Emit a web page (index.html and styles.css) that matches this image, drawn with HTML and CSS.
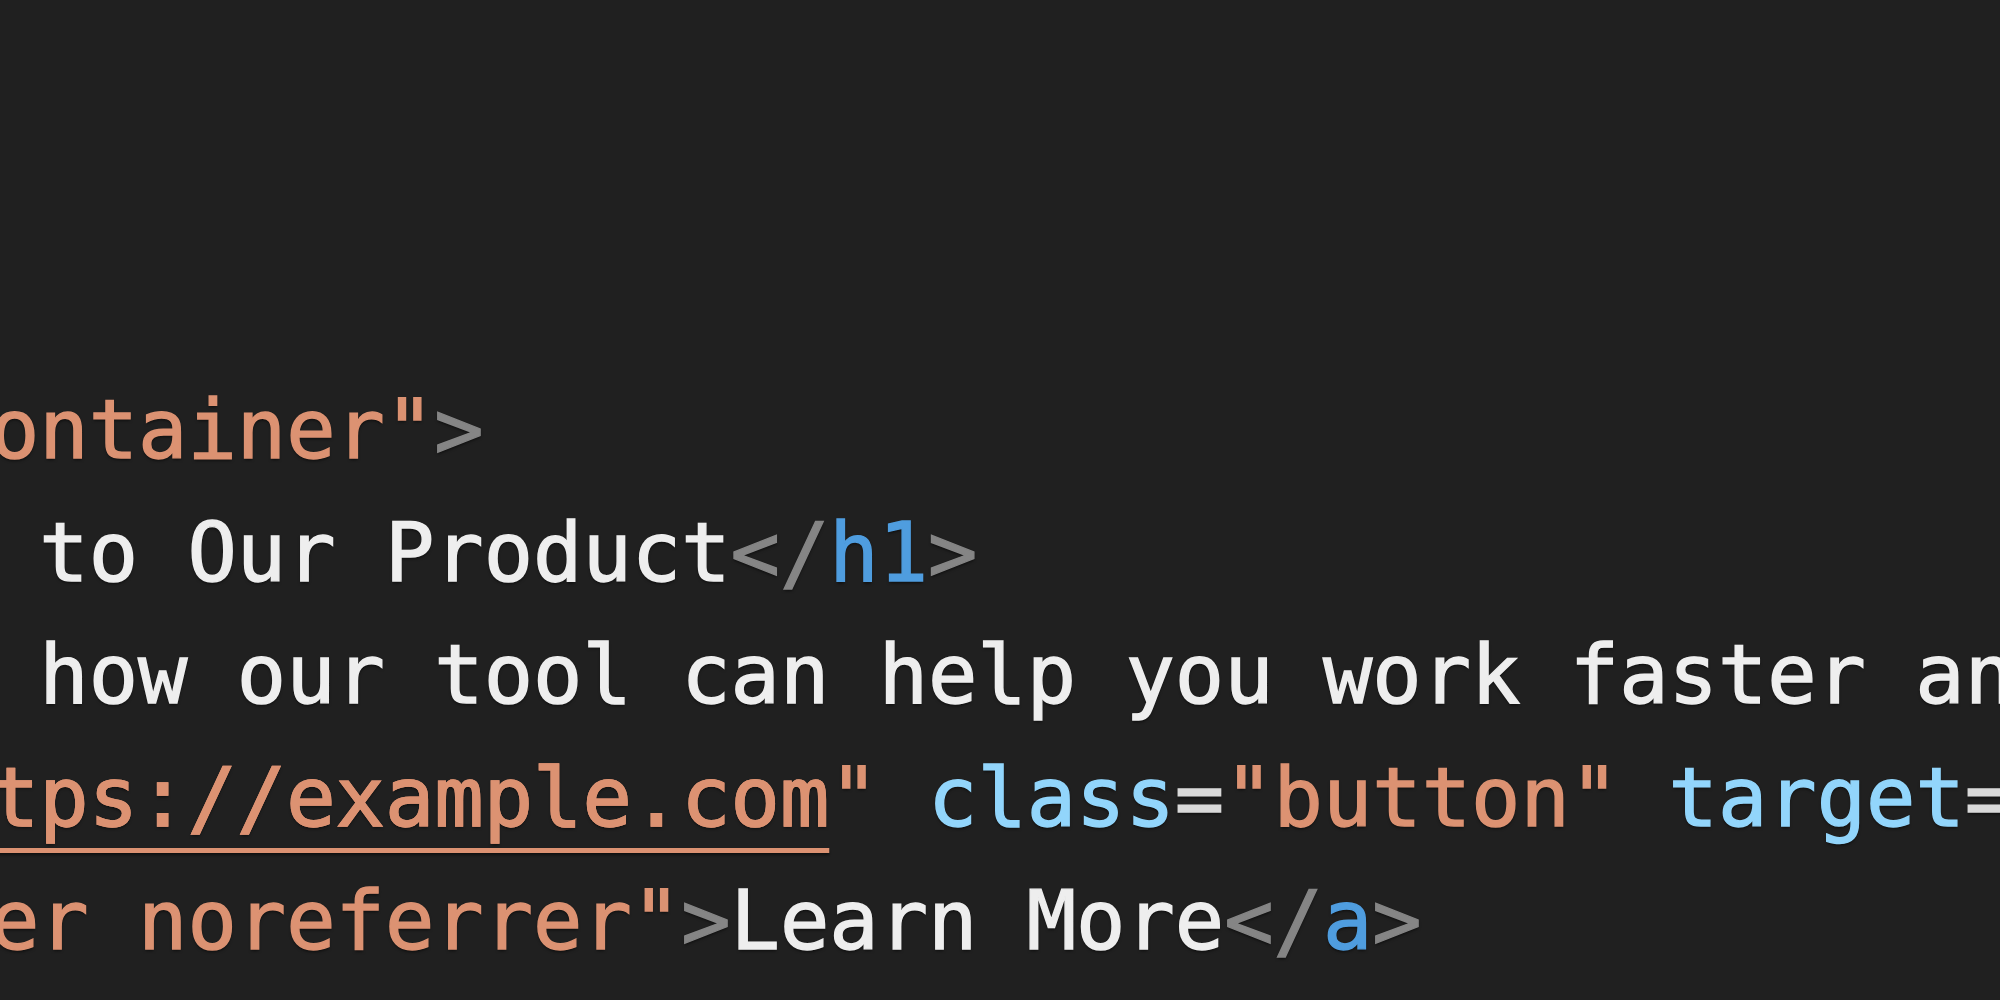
FILE: index.html
```html
<!DOCTYPE html>
<html lang="en">
<head>
<meta charset="utf-8">
<title>Editor</title>
<link rel="stylesheet" href="styles.css">
</head>
<body>
<main class="editor">
  <div class="code">
    <div class="line"><span class="str">ontainer"</span><span class="p">&gt;</span></div>
    <div class="line"><span class="txt"> to Our Product</span><span class="p">&lt;/</span><span class="tag">h1</span><span class="p">&gt;</span></div>
    <div class="line"><span class="txt"> how our tool can help you work faster and</span></div>
    <div class="line"><span class="str"><span class="link">tps://example.com</span>"</span> <span class="attr">class</span><span class="eq">=</span><span class="str">"button"</span> <span class="attr">target</span><span class="eq">=</span></div>
    <div class="line"><span class="str">er noreferrer"</span><span class="p">&gt;</span><span class="txt">Learn More</span><span class="p">&lt;/</span><span class="tag">a</span><span class="p">&gt;</span></div>
  </div>
</main>
</body>
</html>
```
FILE: styles.css
```css
html, body {
  margin: 0;
  padding: 0;
  width: 2000px;
  height: 1000px;
  overflow: hidden;
  background: #202020;
}

.editor {
  width: 2000px;
  height: 1000px;
  overflow: hidden;
  background: #202020;
}

.code {
  font-family: "DejaVu Sans Mono", "Liberation Mono", monospace;
  font-size: 82px;
  line-height: 122.7px;
  padding-top: 369px;
  margin-left: -10px;
  color: #e6e6e6;
  -webkit-text-stroke: 1.4px currentColor;
  text-shadow: 0 2px 3px rgba(0, 0, 0, 0.55);
}

.line {
  white-space: pre;
  height: 122.7px;
}

.p { color: #858585; }
.tag { color: #4f9ddf; }
.attr { color: #92d5fb; }
.eq { color: #d9d9d9; }
.str { color: #dc9272; }
.txt { color: #eeeeee; }

.link {
  text-decoration: underline;
  text-decoration-color: #dc9272;
  text-decoration-thickness: 5px;
  text-underline-offset: 22px;
}
```
